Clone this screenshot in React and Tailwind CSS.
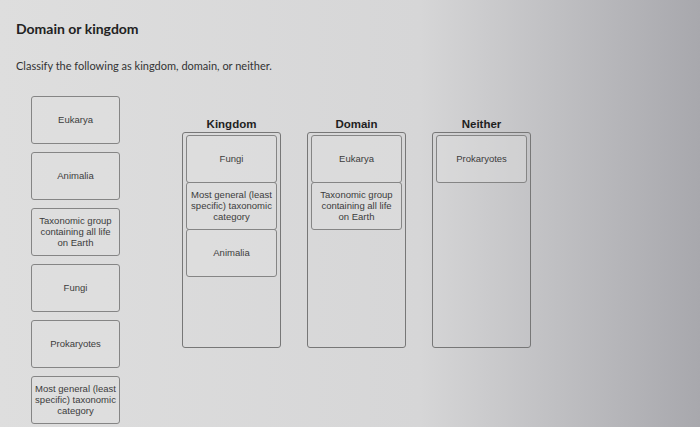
const choices = [
  ['Eukarya'],
  ['Animalia'],
  ['Taxonomic group', 'containing all life', 'on Earth'],
  ['Fungi'],
  ['Prokaryotes'],
  ['Most general (least', 'specific) taxonomic', 'category'],
];

const buckets = [
  { title: 'Kingdom', items: [['Fungi'], ['Most general (least', 'specific) taxonomic', 'category'], ['Animalia']] },
  { title: 'Domain', items: [['Eukarya'], ['Taxonomic group', 'containing all life', 'on Earth']] },
  { title: 'Neither', items: [['Prokaryotes']] },
];

function Card({ lines, className = '' }) {
  return (
    <div
      className={`flex flex-col items-center justify-center h-[48px] border border-[#858585] rounded-[3px] bg-[#e2e2e2]/40 text-[9.5px] leading-[11px] text-[#3c3c3c] text-center ${className}`}
    >
      {lines.map((l) => (
        <span key={l}>{l}</span>
      ))}
    </div>
  );
}

export default function App() {
  return (
    <div className="w-[700px] h-[427px] overflow-hidden bg-linear-to-r from-[#dedede] via-[#d6d6d7] via-60% to-[#a8a8ad] font-['Liberation_Sans',Arial,sans-serif]">
      {/* header */}
      <div className="pl-[16px] pt-[18px] font-['Lato',sans-serif]">
        <h1 className="text-[14px] font-bold text-[#222]">Domain or kingdom</h1>
        <p className="mt-[19px] text-[11px] text-[#333]">Classify the following as kingdom, domain, or neither.</p>
      </div>

      <div className="flex items-start pl-[31px] mt-[21px]">
        {/* draggable choices */}
        <div className="flex flex-col gap-[8px] w-[89px]">
          {choices.map((c, i) => (
            <Card key={i} lines={c} />
          ))}
        </div>

        {/* drop zones */}
        <div className="flex gap-[26px] ml-[62px] mt-[20px]">
          {buckets.map((b) => (
            <div key={b.title} className="w-[99px]">
              <div className="h-[16px] text-center text-[11.5px] font-bold text-[#1f1f1f]">{b.title}</div>
              <div className="h-[216px] border border-[#777] rounded-[3px] px-[3px] pt-[2px]">
                {b.items.map((it, i) => (
                  <Card key={i} lines={it} className={i > 0 ? '-mt-px' : ''} />
                ))}
              </div>
            </div>
          ))}
        </div>
      </div>
    </div>
  );
}
